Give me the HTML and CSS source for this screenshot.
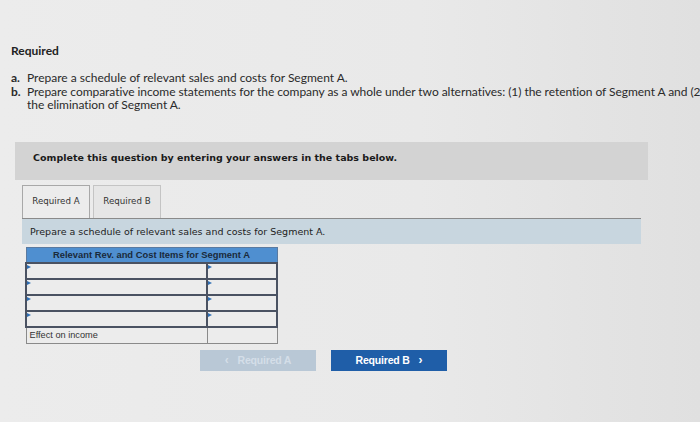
FILE: index.html
```html
<!DOCTYPE html>
<html lang="en">
<head>
    <meta charset="UTF-8">
    <title>Required</title>
    <link rel="stylesheet" href="styles.css">
</head>
<body>
    <div class="page">
        <h2 class="heading">Required</h2>

        <ol class="parts">
            <li><b>a.</b><span>Prepare a schedule of relevant sales and costs for Segment A.</span></li>
            <li><b>b.</b><span>Prepare comparative income statements for the company as a whole under two alternatives: (1) the retention of Segment A and (2)<br>the elimination of Segment A.</span></li>
        </ol>

        <div class="notice">Complete this question by entering your answers in the tabs below.</div>

        <div class="tabs">
            <div class="tab active">Required A</div>
            <div class="tab">Required B</div>
        </div>

        <div class="prompt">Prepare a schedule of relevant sales and costs for Segment A.</div>

        <table class="schedule">
            <tr>
                <th colspan="2">Relevant Rev. and Cost Items for Segment A</th>
            </tr>
            <tr class="entry"><td class="mark"></td><td class="mark"></td></tr>
            <tr class="entry"><td class="mark"></td><td class="mark"></td></tr>
            <tr class="entry"><td class="mark"></td><td class="mark"></td></tr>
            <tr class="entry"><td class="mark"></td><td class="mark"></td></tr>
            <tr class="total"><td>Effect on income</td><td></td></tr>
        </table>

        <div class="nav">
            <button class="prev" disabled><span class="chev">&lsaquo;</span>Required A</button>
            <button class="next">Required B<span class="chev after">&rsaquo;</span></button>
        </div>
    </div>
</body>
</html>
```

FILE: styles.css
```css
* {
    margin: 0;
    padding: 0;
    box-sizing: border-box;
}

body {
    width: 700px;
    height: 422px;
    overflow: hidden;
    background: linear-gradient(90deg, #ececec 0%, #e9e9e9 60%, #e0e0e0 100%);
    font-family: 'Lato', sans-serif;
    color: #222;
}

.page {
    padding: 44px 0 0 11px;
    width: 760px;
}

.heading {
    font-size: 12px;
    font-weight: bold;
    line-height: 14px;
    margin-bottom: 13px;
}

.parts {
    list-style: none;
    font-size: 12px;
    line-height: 13.5px;
    color: #2a2a2a;
}

.parts li {
    display: flex;
    white-space: nowrap;
}

.parts li:last-child span {
    letter-spacing: -0.05px;
}

.parts li b {
    width: 16px;
    flex-shrink: 0;
}

.notice {
    margin: 30px 0 0 4px;
    width: 633px;
    height: 38px;
    background: #d3d3d3;
    padding: 10px 0 0 18px;
    font-family: 'DejaVu Sans', sans-serif;
    font-weight: bold;
    font-size: 9.5px;
    color: #1a1a1a;
}

.tabs {
    display: flex;
    gap: 3px;
    margin: 5px 0 0 11px;
    width: 619px;
    border-bottom: 1px solid #8a8a8a;
}

.tab {
    width: 68px;
    height: 33px;
    border: 1px solid #c4c4c4;
    border-bottom: none;
    background: #e6e6e6;
    font-family: 'DejaVu Sans', sans-serif;
    font-size: 8.7px;
    line-height: 31px;
    text-align: center;
    color: #333;
}

.tab.active {
    background: #ececec;
    border-color: #a8a8a8;
}

.prompt {
    margin-left: 11px;
    width: 619px;
    height: 25px;
    background: #c8d6df;
    padding-left: 8px;
    font-family: 'DejaVu Sans', sans-serif;
    font-size: 9.5px;
    line-height: 25px;
    color: #222;
}

.schedule {
    margin: 3px 0 0 14px;
    border-collapse: collapse;
    font-family: 'Liberation Sans', sans-serif;
    font-size: 9.2px;
}

.schedule th {
    height: 16px;
    background: #4f8fd0;
    color: #1a2a3a;
    font-weight: bold;
    font-size: 9.4px;
    border: 1px solid #5a7aa0;
    padding: 0;
    text-align: center;
}

.schedule td {
    height: 16px;
    border: 2px solid #4a5262;
    background: #ececec;
    position: relative;
    padding: 0 0 0 3px;
}

.schedule td:first-child {
    width: 181px;
}

.schedule td:last-child {
    width: 70px;
}

.schedule .total td {
    border: 1px solid #8a8a8a;
    color: #333;
}

.mark::before {
    content: "";
    position: absolute;
    left: 0;
    top: 1px;
    border-left: 4px solid #2f6fb5;
    border-top: 2px solid transparent;
    border-bottom: 2px solid transparent;
}

.nav {
    display: flex;
    gap: 15px;
    margin: 6px 0 0 189px;
}

.nav button {
    width: 116px;
    height: 21px;
    border: none;
    font-family: 'Liberation Sans', sans-serif;
    font-weight: bold;
    font-size: 10.5px;
    letter-spacing: -0.2px;
    color: #fff;
}

.chev {
    font-size: 12px;
    margin-right: 9px;
}

.chev.after {
    margin: 0 0 0 9px;
}

.prev {
    background: #b9c8d6;
    color: #d4dee8 !important;
}

.next {
    background: #1f5ea8;
}
```
